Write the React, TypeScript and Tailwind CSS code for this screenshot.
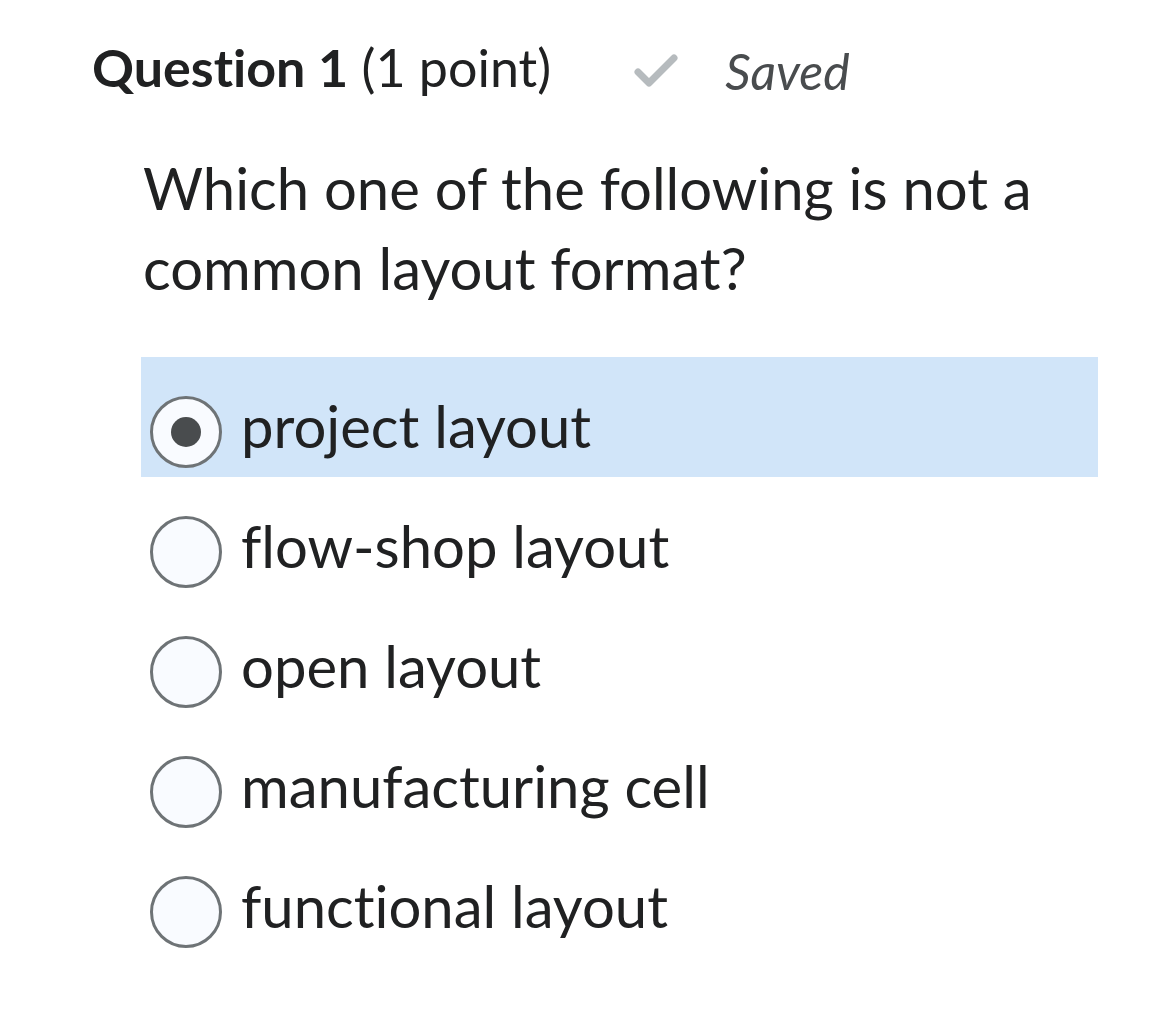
import { useState } from "react";

const OPTIONS = [
  "project layout",
  "flow-shop layout",
  "open layout",
  "manufacturing cell",
  "functional layout",
];

function Radio({ checked }: { checked: boolean }) {
  return (
    <span className="grid size-[72px] shrink-0 place-items-center rounded-full border-[3px] border-[#6e7376] bg-[#f9fbff]">
      {checked && <span className="size-[30px] rounded-full bg-[#494c4e]" />}
    </span>
  );
}

export default function App() {
  const [selected, setSelected] = useState(0);

  return (
    <div className="min-h-screen bg-white font-['Lato','Noto_Sans',sans-serif] text-[#202122] [font-variant-ligatures:none]">
      {/* header */}
      <div className="flex items-baseline pl-[92px] pt-[31px]">
        <h2 className="text-[52px] leading-[60px]">
          <span className="font-bold">Question 1</span> (1 point)
        </h2>
        <span className="ml-[82px] flex items-baseline gap-[46px] text-[#494c4e]">
          <svg width="46" height="34" viewBox="0 0 46 34" className="self-center translate-y-[2px]" aria-hidden="true">
            <path d="M5 18 L16 29 L41 4" fill="none" stroke="#b6bbbe" strokeWidth="7" strokeLinecap="round" strokeLinejoin="round" />
          </svg>
          <span className="translate-y-[3px] text-[50px] italic">Saved</span>
        </span>
      </div>

      {/* question */}
      <p className="ml-[143px] mt-[42px] w-[920px] text-[58px] leading-[80px]">
        Which one of the following is not a common layout format?
      </p>

      {/* options */}
      <ul className="ml-[141px] mt-[49px] w-[957px]">
        {OPTIONS.map((o, i) => (
          <li
            key={o}
            onClick={() => setSelected(i)}
            className={
              "flex h-[120px] cursor-pointer items-start pl-[9px] pt-[39px] " +
              (selected === i ? "bg-[#d1e5f9]" : "")
            }
          >
            <Radio checked={selected === i} />
            <span className="ml-[19px] text-[58px] leading-[60px]">{o}</span>
          </li>
        ))}
      </ul>
    </div>
  );
}
